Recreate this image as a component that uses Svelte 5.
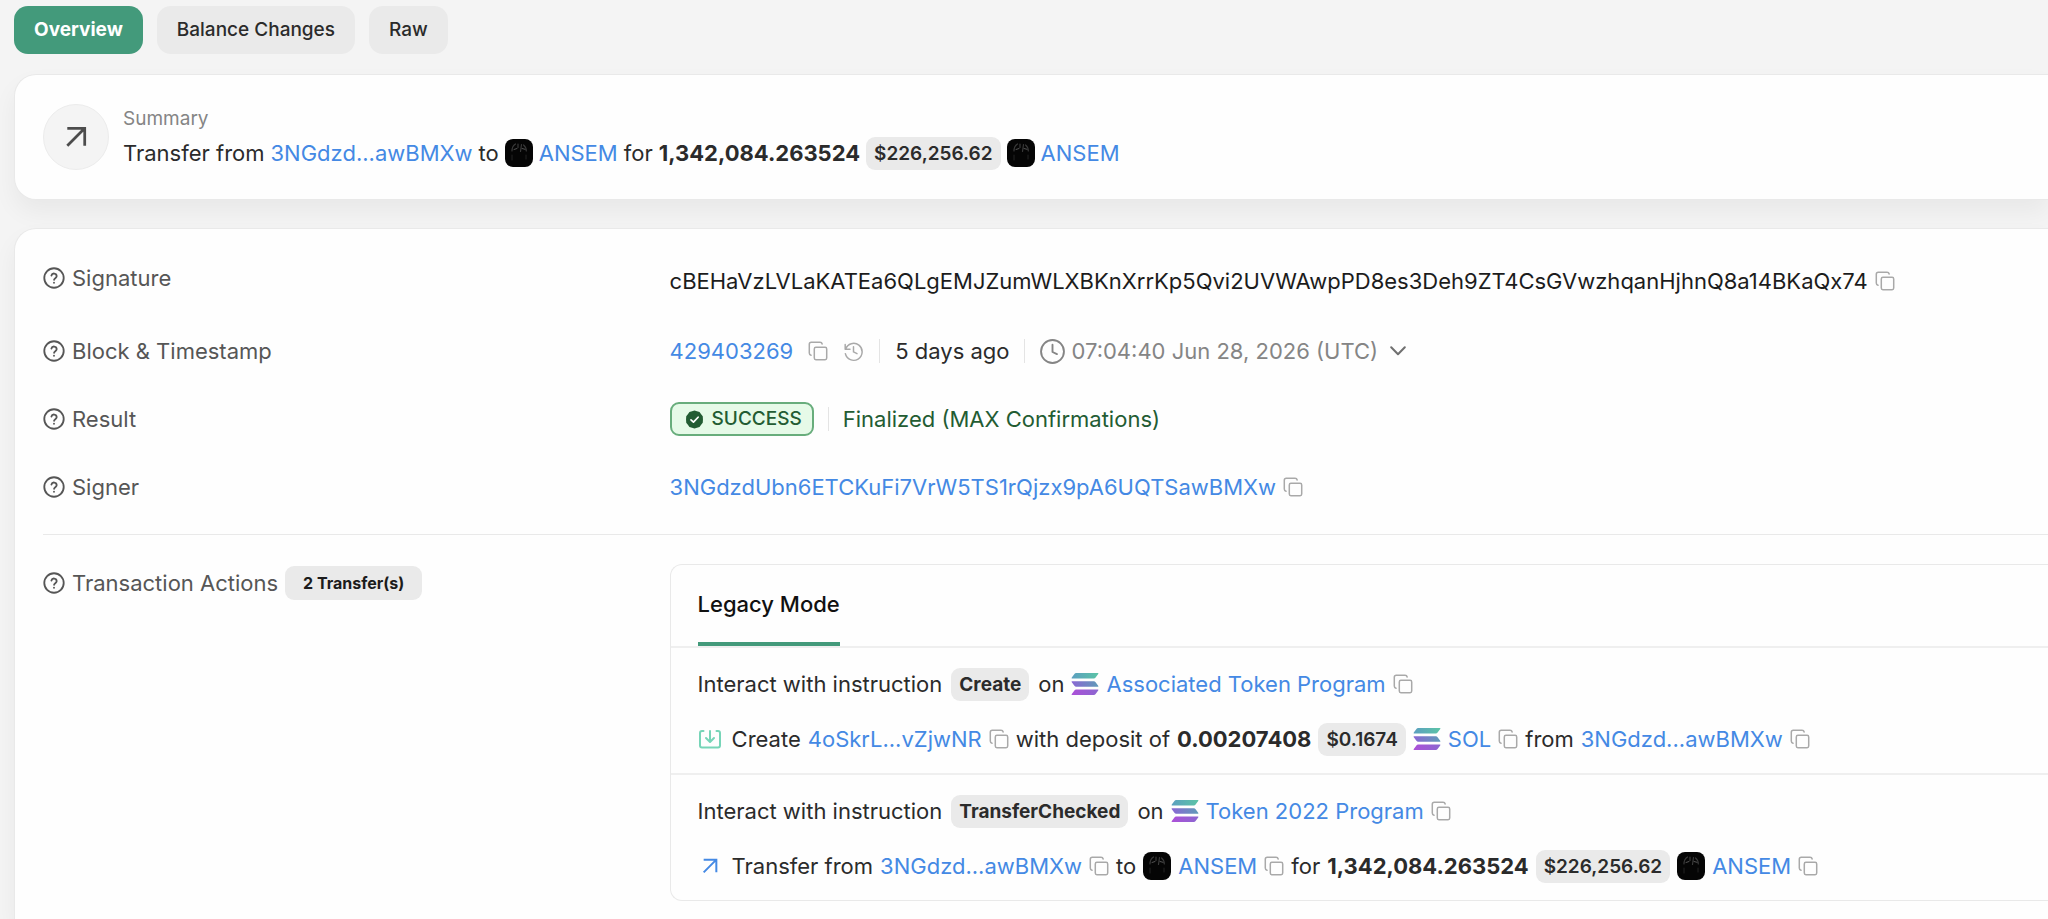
<script lang="ts">
	const tabs = ['Overview', 'Balance Changes', 'Raw'];
	let activeTab = $state('Overview');

	const signature =
		'cBEHaVzLVLaKATEa6QLgEMJZumWLXBKnXrrKp5Qvi2UVWAwpPD8es3Deh9ZT4CsGVwzhqanHjhnQ8a14BKaQx74';
	const signer = '3NGdzdUbn6ETCKuFi7VrW5TS1rQjzx9pA6UQTSawBMXw';

	function copy(text: string) {
		navigator.clipboard?.writeText(text);
	}
</script>

{#snippet help(label: string)}
	<svg class="help" viewBox="0 0 24 24" aria-hidden="true">
		<circle cx="12" cy="12" r="10.6" />
		<path d="M9.2 9.3a2.9 2.9 0 0 1 5.7.8c0 1.9-2.8 2.2-2.8 3.9" />
		<path d="M12 17v.3" />
	</svg>
	<span>{label}</span>
{/snippet}

{#snippet copyBtn(text: string)}
	<button class="icon-btn" aria-label="Copy" onclick={() => copy(text)}>
		<svg class="copy" viewBox="0 0 20 20" aria-hidden="true">
			<rect x="6.3" y="6.3" width="12.4" height="12.4" rx="1.6" />
			<path d="M3 14.2C1.8 13.9 1.3 13.3 1.3 12V3.3c0-1.3.7-2 2-2H12c1.3 0 1.9.5 2.2 1.7" />
		</svg>
	</button>
{/snippet}

{#snippet arrow()}
	<svg class="arrow" viewBox="0 0 24 24" aria-hidden="true">
		<path d="M2.5 2.5H21.5V21.5M21.5 2.5L2.5 21.5" />
	</svg>
{/snippet}

{#snippet solana()}
	<svg class="sol" viewBox="0 0 28 22" aria-hidden="true">
		<defs>
			<linearGradient id="sol-top" x1="0" y1="0" x2="1" y2="0">
				<stop offset="0" stop-color="#5c9fc0" />
				<stop offset="1" stop-color="#5bc4a6" />
			</linearGradient>
			<linearGradient id="sol-mid" x1="0" y1="0" x2="1" y2="0">
				<stop offset="0" stop-color="#8a66d4" />
				<stop offset="1" stop-color="#5f9bb8" />
			</linearGradient>
			<linearGradient id="sol-low" x1="0" y1="0" x2="1" y2="0">
				<stop offset="0" stop-color="#ac50d8" />
				<stop offset="1" stop-color="#8b67d0" />
			</linearGradient>
		</defs>
		<path fill="url(#sol-top)" d="M3.6.7Q4.200 0 5 0H26.800Q28 0 27.200 1L24.400 4.800Q23.800 5.500 23 5.500H1.200Q0 5.500.8 4.500Z" />
		<path fill="url(#sol-mid)" d="M.8 9.300Q0 8.300 1.200 8.300H23Q23.800 8.300 24.400 9L27.200 12.800Q28 13.800 26.800 13.800H5Q4.200 13.800 3.600 13.100Z" />
		<path fill="url(#sol-low)" d="M3.6 17.200Q4.200 16.500 5 16.500H26.800Q28 16.500 27.200 17.500L24.400 21.300Q23.800 22 23 22H1.200Q0 22 .8 21Z" />
	</svg>
{/snippet}

{#snippet ansem()}
	<svg class="token" viewBox="0 0 28 28" aria-hidden="true">
		<rect width="28" height="28" rx="8" fill="#050505" />
		<path d="M7 12c0-3 1-5.500 3.500-7M13 5v3.500M16.500 5.500l-1 7M18.500 6c2 1.500 2.800 3.500 2.800 6" stroke="#3a3a3a" stroke-width="1.2" />
		<path d="M9 10.500l3-1M17 9.500l3 .8" stroke="#555" stroke-width="1" />
		<path d="M7 16v5M21 16v4" stroke="#1f1f1f" stroke-width="1.2" />
	</svg>
	<a href="#ansem">ANSEM</a>
{/snippet}

<div class="page">
	<nav class="tabs">
		{#each tabs as tab}
			<button class="tab" class:active={tab === activeTab} onclick={() => (activeTab = tab)}>{tab}</button>
		{/each}
	</nav>

	<section class="card summary">
		<div class="badge">{@render arrow()}</div>
		<div class="summary-text">
			<h2>Summary</h2>
			<div class="line">
				<span>Transfer from</span>
				<a href="#signer">3NGdzd...awBMXw</a>
				<span>to</span>
				{@render ansem()}
				<span>for</span>
				<b>1,342,084.263524</b>
				<span class="chip">$226,256.62</span>
				{@render ansem()}
			</div>
		</div>
	</section>

	<section class="card details">
		<dl class="rows">
			<dt>{@render help('Signature')}</dt>
			<dd class="signature">
				<span>{signature}</span>
				{@render copyBtn(signature)}
			</dd>

			<dt>{@render help('Block & Timestamp')}</dt>
			<dd class="block">
				<a href="#block">429403269</a>
				{@render copyBtn('429403269')}
				<button class="icon-btn" aria-label="History">
					<svg class="history" viewBox="0 0 24 24" aria-hidden="true">
						<path d="M2.5 4v5.500H8M3 9.200A9.700 9.700 0 1 1 2.700 14.500" />
						<path d="M12 6.500V12.500L16 14.500" />
					</svg>
				</button>
				<i class="sep"></i>
				<span>5 days ago</span>
				<i class="sep"></i>
				<button class="time">
					<svg class="clock" viewBox="0 0 24 24" aria-hidden="true">
						<circle cx="12" cy="12" r="11" />
						<path d="M12 5.500V12.500L16.300 14.500" />
					</svg>
					<span>07:04:40 Jun 28, 2026 (UTC)</span>
					<svg class="chevron" viewBox="0 0 16 10" aria-hidden="true">
						<path d="M1.200 1.200L8 8.300L14.800 1.200" />
					</svg>
				</button>
			</dd>

			<dt>{@render help('Result')}</dt>
			<dd class="result">
				<span class="success">
					<svg viewBox="0 0 20 20" aria-hidden="true">
						<path
							fill="#235c33"
							d="M10 .5l2.600.9 2.700.8 1.700 2.200 1.700 2.300.2 3.300-.2 3.300-1.700 2.300-1.700 2.200-2.700.9-2.600.9-2.600-.9-2.700-.9L3 15.600l-1.700-2.300L1.100 10l.2-3.300L3 4.400l1.700-2.200 2.700-.8z"
						/>
						<path d="M6.300 10.300l2.600 2.500 4.900-5.200" stroke="#fff" stroke-width="1.8" />
					</svg>
					SUCCESS
				</span>
				<i class="sep"></i>
				<span class="final">Finalized (MAX Confirmations)</span>
			</dd>

			<dt>{@render help('Signer')}</dt>
			<dd>
				<a href="#signer">{signer}</a>
				{@render copyBtn(signer)}
			</dd>
		</dl>

		<div class="actions">
			<div class="actions-label">
				{@render help('Transaction Actions')}
				<span class="count">2 Transfer(s)</span>
			</div>
			<div class="panel">
				<div class="panel-head">
					<button class="mode">Legacy Mode</button>
				</div>
				<div class="instruction">
					<div class="line">
						<span>Interact with instruction</span>
						<span class="chip name">Create</span>
						<span>on</span>
						{@render solana()}
						<a href="#associated-token">Associated Token Program</a>
						{@render copyBtn('Associated Token Program')}
					</div>
					<div class="line">
						<svg class="deposit" viewBox="0 0 24 24" aria-hidden="true">
							<path d="M5.500 4H4a2 2 0 0 0-2 2v12.500a2 2 0 0 0 2 2h16a2 2 0 0 0 2-2V6a2 2 0 0 0-2-2h-1.500" />
							<path d="M12 4v10.500M8 11l4 4 4-4" />
						</svg>
						<span>Create</span>
						<a href="#account">4oSkrL...vZjwNR</a>
						{@render copyBtn('4oSkrL...vZjwNR')}
						<span>with deposit of</span>
						<b>0.00207408</b>
						<span class="chip">$0.1674</span>
						{@render solana()}
						<a href="#sol">SOL</a>
						{@render copyBtn('SOL')}
						<span>from</span>
						<a href="#signer">3NGdzd...awBMXw</a>
						{@render copyBtn(signer)}
					</div>
				</div>
				<div class="instruction">
					<div class="line">
						<span>Interact with instruction</span>
						<span class="chip name">TransferChecked</span>
						<span>on</span>
						{@render solana()}
						<a href="#token-2022">Token 2022 Program</a>
						{@render copyBtn('Token 2022 Program')}
					</div>
					<div class="line">
						<span class="send">{@render arrow()}</span>
						<span>Transfer from</span>
						<a href="#signer">3NGdzd...awBMXw</a>
						{@render copyBtn(signer)}
						<span>to</span>
						{@render ansem()}
						{@render copyBtn('ANSEM')}
						<span>for</span>
						<b>1,342,084.263524</b>
						<span class="chip">$226,256.62</span>
						{@render ansem()}
						{@render copyBtn('ANSEM')}
					</div>
				</div>
			</div>
		</div>
	</section>
</div>

<style>
	:global(body) {
		background: #f4f4f4;
	}

	.page {
		box-sizing: border-box;
		min-height: 100vh;
		display: flex;
		flex-direction: column;
		padding: 6px 0 0 14px;
		overflow: hidden;
		font-family: Inter, 'Liberation Sans', sans-serif;
		font-size: 22px;
		line-height: 32px;
		color: #2b2b2b;
	}

	button {
		font: inherit;
		color: inherit;
		border: 0;
		padding: 0;
		background: none;
		cursor: pointer;
	}

	a {
		color: #4489e4;
		text-decoration: none;
	}

	svg {
		display: block;
		flex: none;
		fill: none;
		stroke-linecap: round;
		stroke-linejoin: round;
	}

	.tabs {
		display: flex;
		gap: 14px;
		margin-bottom: 20px;
	}

	.tab {
		height: 48px;
		padding: 0 20px;
		border-radius: 14px;
		background: #eaeaea;
		font-size: 19px;
		font-weight: 500;
	}

	.tab.active {
		background: #439a7b;
		color: #fff;
		font-weight: 700;
	}

	.card {
		background: #fefefe;
		border: 1px solid #e9e9e9;
		border-right: 0;
		border-radius: 22px 0 0 22px;
		box-shadow: 0 12px 24px rgba(0, 0, 0, 0.05);
	}

	.summary {
		display: flex;
		align-items: center;
		gap: 14px;
		padding: 26px 28px;
		margin-bottom: 28px;
	}

	.badge {
		box-sizing: border-box;
		width: 66px;
		height: 66px;
		display: grid;
		place-items: center;
		border: 1px solid #ececec;
		border-radius: 50%;
		background: #f4f4f4;
	}

	.arrow {
		width: 22px;
		height: 22px;
		stroke: #4c4c4c;
		stroke-width: 3;
		stroke-linecap: butt;
		stroke-linejoin: miter;
	}

	h2 {
		margin: 0;
		font-size: 19px;
		line-height: 28px;
		font-weight: 400;
		color: #858585;
	}

	.summary-text {
		padding-top: 4px;
	}

	.line {
		display: flex;
		align-items: center;
		gap: 7px;
		height: 40px;
		white-space: nowrap;
	}

	.summary .line {
		gap: 6px;
	}

	b {
		font-weight: 700;
	}

	.chip {
		padding: 0 8px;
		border-radius: 9px;
		background: #eaeaea;
		font-size: 19px;
		font-weight: 600;
		line-height: 33px;
	}

	.chip.name {
		margin: 0 2px;
		font-weight: 700;
	}

	.token {
		width: 28px;
		height: 28px;
	}

	.sol {
		width: 28px;
		height: 22px;
	}

	.details {
		flex: 1;
		border-bottom: 0;
		border-bottom-left-radius: 0;
		padding: 10px 0 18px 28px;
	}

	.rows {
		display: grid;
		grid-template-columns: 5fr 11fr;
		grid-template-rows: 78px repeat(3, 68px);
		align-items: center;
		margin: 0;
		padding-bottom: 13px;
		border-bottom: 1px solid #e9e9e9;
	}

	dt,
	dd,
	.actions-label {
		display: flex;
		align-items: center;
		gap: 7px;
		margin: 0;
		white-space: nowrap;
	}

	dt,
	.actions-label {
		color: #565656;
	}

	.help {
		width: 22px;
		height: 22px;
		stroke: #565656;
		stroke-width: 2;
	}

	.icon-btn {
		display: block;
		color: #a9a9a9;
	}

	.icon-btn svg {
		stroke: currentColor;
	}

	.copy {
		width: 20px;
		height: 20px;
		stroke-width: 1.5;
	}

	.signature {
		padding-top: 6px;
		color: #1c1c1c;
	}

	.block {
		gap: 15px;
	}

	.history {
		width: 21px;
		height: 21px;
		stroke-width: 1.7;
	}

	.sep {
		width: 1px;
		height: 24px;
		background: #e4e4e4;
	}

	.time {
		display: flex;
		align-items: center;
		gap: 6px;
		color: #858585;
	}

	.clock {
		width: 25px;
		height: 25px;
		stroke: #858585;
		stroke-width: 1.8;
	}

	.chevron {
		width: 16px;
		height: 10px;
		margin-left: 6px;
		stroke: #707070;
		stroke-width: 2;
	}

	.result {
		gap: 14px;
	}

	.success {
		display: flex;
		align-items: center;
		gap: 8px;
		padding: 0 10px 0 13px;
		border: 2px solid #68ad7c;
		border-radius: 9px;
		background: #e6fae8;
		color: #235c33;
		font-size: 19px;
		font-weight: 500;
		line-height: 30px;
	}

	.success svg {
		width: 19px;
		height: 19px;
	}

	.final {
		color: #235c33;
	}

	.actions {
		display: grid;
		grid-template-columns: 5fr 11fr;
		align-items: start;
		padding-top: 29px;
	}

	.actions-label {
		height: 38px;
	}

	.count {
		padding: 0 18px;
		border-radius: 9px;
		background: #eaeaea;
		color: #1c1c1c;
		font-size: 16px;
		font-weight: 700;
		line-height: 34px;
	}

	.panel {
		min-width: 0;
		border: 1px solid #e9e9e9;
		border-right: 0;
		border-radius: 12px 0 0 12px;
	}

	.panel-head {
		display: flex;
		padding-left: 27px;
		border-bottom: 2px solid #efefef;
	}

	.mode {
		height: 81px;
		border-bottom: 4px solid #439a7b;
		color: #111;
		font-weight: 500;
	}

	.instruction {
		display: flex;
		flex-direction: column;
		gap: 15px;
		padding: 16px 0 14px 27px;
	}

	.instruction + .instruction {
		border-top: 2px solid #efefef;
	}

	.deposit {
		width: 24px;
		height: 24px;
		margin-right: 3px;
		stroke: #77d5b8;
		stroke-width: 2;
	}

	.send {
		width: 24px;
		margin-right: 3px;
		display: grid;
		place-items: center;
	}

	.send :global(.arrow) {
		width: 16px;
		height: 16px;
		stroke: #4489e4;
	}
</style>
